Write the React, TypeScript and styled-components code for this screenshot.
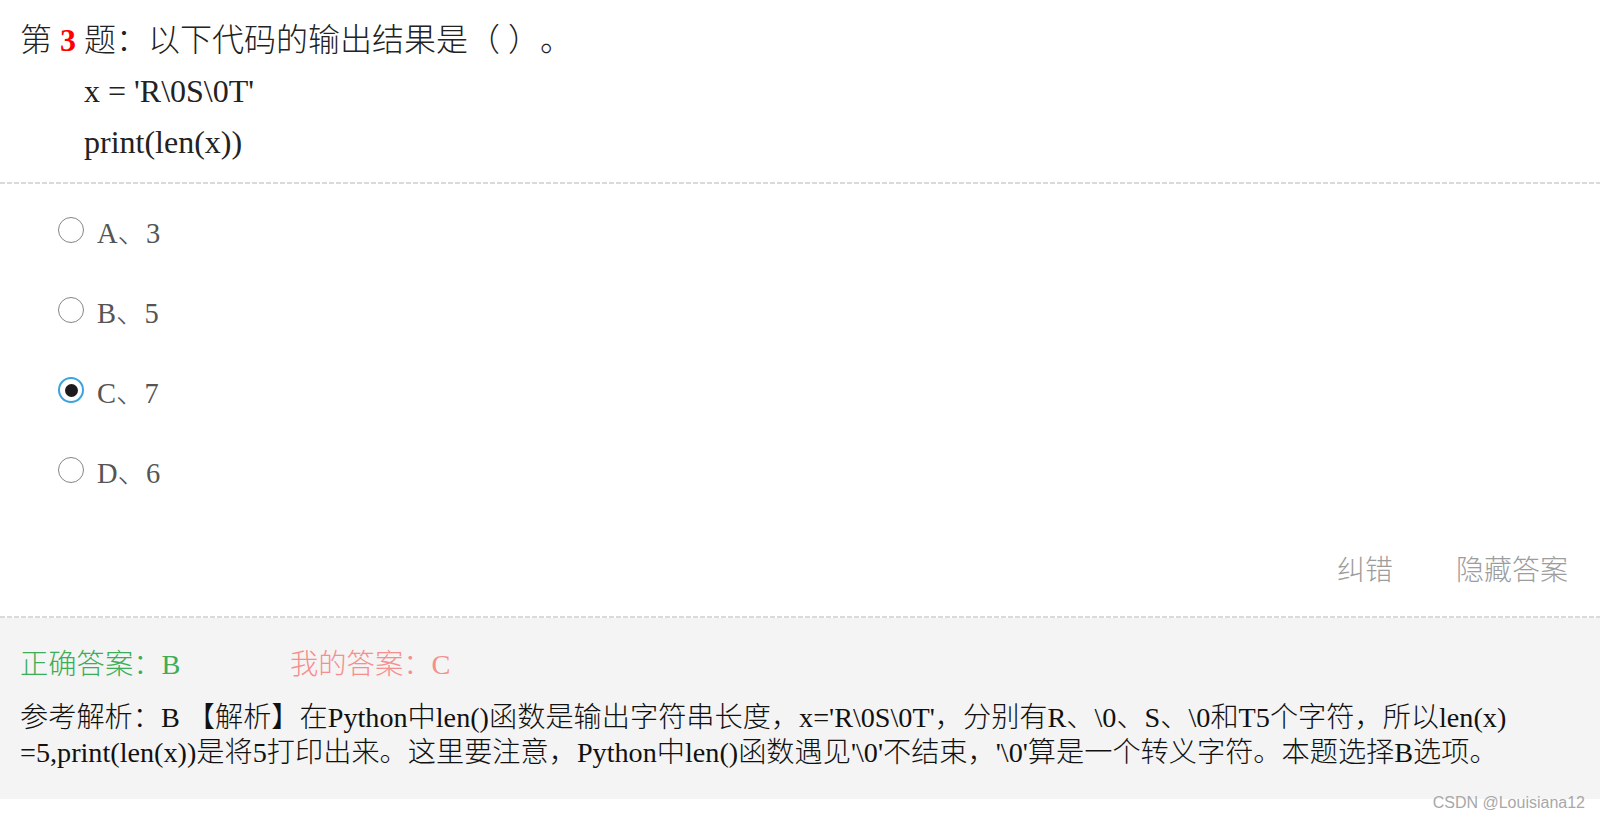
import React from "react";
import styled, { createGlobalStyle } from "styled-components";

const serifCjk = `"Liberation Serif", "Noto Sans CJK SC", serif`;

const GlobalStyle = createGlobalStyle`
  body {
    margin: 0;
    background: #fff;
    font-family: ${serifCjk};
    text-spacing-trim: space-all;
  }
`;

const Page = styled.div`
  position: relative;
  width: 1600px;
  height: 818px;
  overflow: hidden;
  background: #fff;
`;

const Question = styled.section`
  padding: 15px 20px 14px;
`;

const Title = styled.div`
  font-size: 32px;
  line-height: 51px;
  font-weight: 300;
  color: #222;
  white-space: nowrap;
  text-spacing-trim: space-all;
`;

const Num = styled.b`
  color: #f00;
  font-weight: 700;
`;

const CodeLine = styled.div`
  padding-left: 64px;
  font-size: 32px;
  line-height: 51px;
  color: #222;
  white-space: pre;
`;

const DashedRule = styled.div`
  height: 2px;
  background-image: repeating-linear-gradient(
    to right,
    #dadada 0 5px,
    transparent 5px 7px
  );
`;

const Options = styled.div`
  padding-top: 6px;
`;

const OptionRow = styled.label`
  display: flex;
  align-items: center;
  gap: 13px;
  height: 80px;
  padding-left: 58px;
`;

const Radio = styled.span<{ $checked?: boolean }>`
  box-sizing: border-box;
  width: 26px;
  height: 26px;
  border-radius: 50%;
  background: #fff;
  border: ${(p) => (p.$checked ? "2px solid #3ba3de" : "1.8px solid #858585")};
  display: flex;
  align-items: center;
  justify-content: center;
  &::after {
    content: "";
    display: ${(p) => (p.$checked ? "block" : "none")};
    width: 13px;
    height: 13px;
    border-radius: 50%;
    background: #1b1b1b;
  }
`;

const OptionText = styled.span`
  font-size: 28.5px;
  font-weight: 300;
  color: #555;
  white-space: pre;
`;

const Actions = styled.div`
  display: flex;
  justify-content: flex-end;
  align-items: center;
  gap: 63px;
  height: 40px;
  margin: 38px 0 28px;
  padding-right: 32px;
`;

const ActionLink = styled.span`
  font-family: "Noto Sans CJK SC", sans-serif;
  font-weight: 300;
  font-size: 28px;
  color: #9d9d9d;
  cursor: pointer;
`;

const AnswerPanel = styled.section`
  background: #f4f4f4;
  padding: 23px 20px 29px;
`;

const AnswerRow = styled.div`
  display: grid;
  grid-template-columns: 270px auto;
  align-items: center;
  height: 40px;
`;

const Answer = styled.span<{ $tone: "right" | "mine" }>`
  font-size: 28.3px;
  font-weight: 300;
  color: ${(p) => (p.$tone === "right" ? "#3cad58" : "#f78e8e")};
  white-space: pre;
`;

const Explain = styled.div`
  margin-top: 19px;
  font-size: 28.2px;
  font-weight: 300;
  line-height: 35px;
  color: #111;
`;

const ExplainLine = styled.div`
  white-space: pre;
`;

const Watermark = styled.div`
  position: absolute;
  right: 15px;
  bottom: 6px;
  font-family: "Liberation Sans", sans-serif;
  font-size: 16px;
  color: #a8a8a8;
`;

const options = [
  { key: "A", value: "3" },
  { key: "B", value: "5" },
  { key: "C", value: "7" },
  { key: "D", value: "6" },
];

export default function App() {
  const picked = "C";
  return (
    <Page>
      <GlobalStyle />
      <Question>
        <Title>
          第 <Num>3</Num> 题：以下代码的输出结果是（ ）。
        </Title>
        <CodeLine>{"x = 'R\\0S\\0T'"}</CodeLine>
        <CodeLine>print(len(x))</CodeLine>
      </Question>
      <DashedRule />
      <Options>
        {options.map((o) => (
          <OptionRow key={o.key}>
            <Radio $checked={o.key === picked} />
            <OptionText>
              {o.key}、{o.value}
            </OptionText>
          </OptionRow>
        ))}
      </Options>
      <Actions>
        <ActionLink>纠错</ActionLink>
        <ActionLink>隐藏答案</ActionLink>
      </Actions>
      <DashedRule />
      <AnswerPanel>
        <AnswerRow>
          <Answer $tone="right">正确答案：B</Answer>
          <Answer $tone="mine">我的答案：C</Answer>
        </AnswerRow>
        <Explain>
          <ExplainLine>
            {"参考解析：B 【解析】在Python中len()函数是输出字符串长度，x='R\\0S\\0T'，分别有R、\\0、S、\\0和T5个字符，所以len(x)"}
          </ExplainLine>
          <ExplainLine>
            {"=5,print(len(x))是将5打印出来。这里要注意，Python中len()函数遇见'\\0'不结束，'\\0'算是一个转义字符。本题选择B选项。"}
          </ExplainLine>
        </Explain>
      </AnswerPanel>
      <Watermark>CSDN @Louisiana12</Watermark>
    </Page>
  );
}
